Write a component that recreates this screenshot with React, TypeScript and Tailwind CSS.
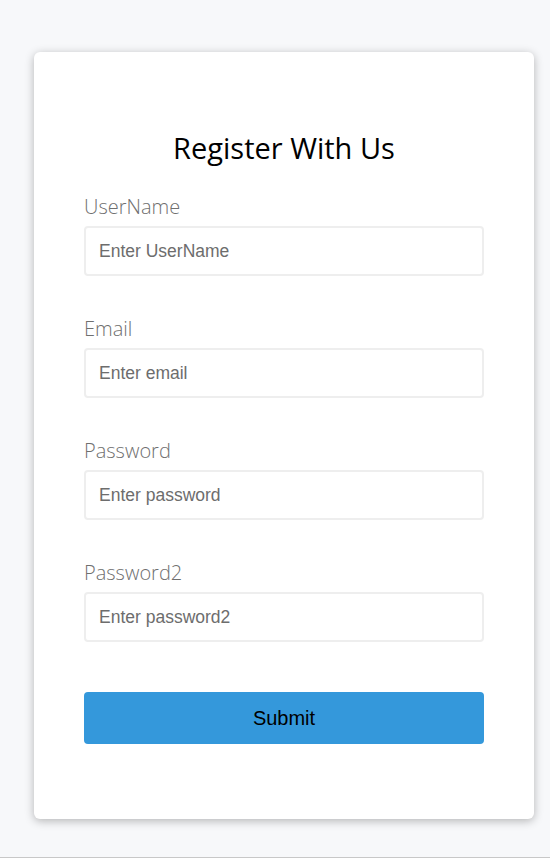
export default function App() {
  const fields = [
    { label: "UserName", placeholder: "Enter UserName", type: "text" },
    { label: "Email", placeholder: "Enter email", type: "email" },
    { label: "Password", placeholder: "Enter password", type: "password" },
    { label: "Password2", placeholder: "Enter password2", type: "password" },
  ];

  return (
    <div className="h-[858px] bg-[#f7f8fa] border-b border-[#c8c8c8] pt-[52px]">
      <div className="ml-[34px] w-[500px] rounded-[6px] bg-white px-[50px] pt-[76px] pb-[75px] shadow-[0_2px_10px_rgba(0,0,0,0.28)]">
        <h1 className="text-center text-[29px] leading-[40px] text-black font-['Open_Sans',sans-serif]">
          Register With Us
        </h1>
        <form className="mt-[25px]" onSubmit={(e) => e.preventDefault()}>
          {fields.map((f) => (
            <div key={f.label} className="mb-[39px]">
              <label className="block text-[20px] leading-[28px] font-light text-[#6f6f6f] font-['Open_Sans',sans-serif]">
                {f.label}
              </label>
              <input
                type={f.type}
                placeholder={f.placeholder}
                className="mt-[5px] block h-[50px] w-full rounded-[4px] border-2 border-[#eeeeee] px-[13px] text-[17.5px] font-['Liberation_Sans',Arial,sans-serif] text-[#333] placeholder:text-[#6d6d6d] outline-none"
              />
            </div>
          ))}
          <button
            type="submit"
            className="mt-[50px] block h-[52px] w-full rounded-[4px] bg-[#3498db] text-[20px] text-black font-['Liberation_Sans',Arial,sans-serif]"
          >
            Submit
          </button>
        </form>
      </div>
    </div>
  );
}
